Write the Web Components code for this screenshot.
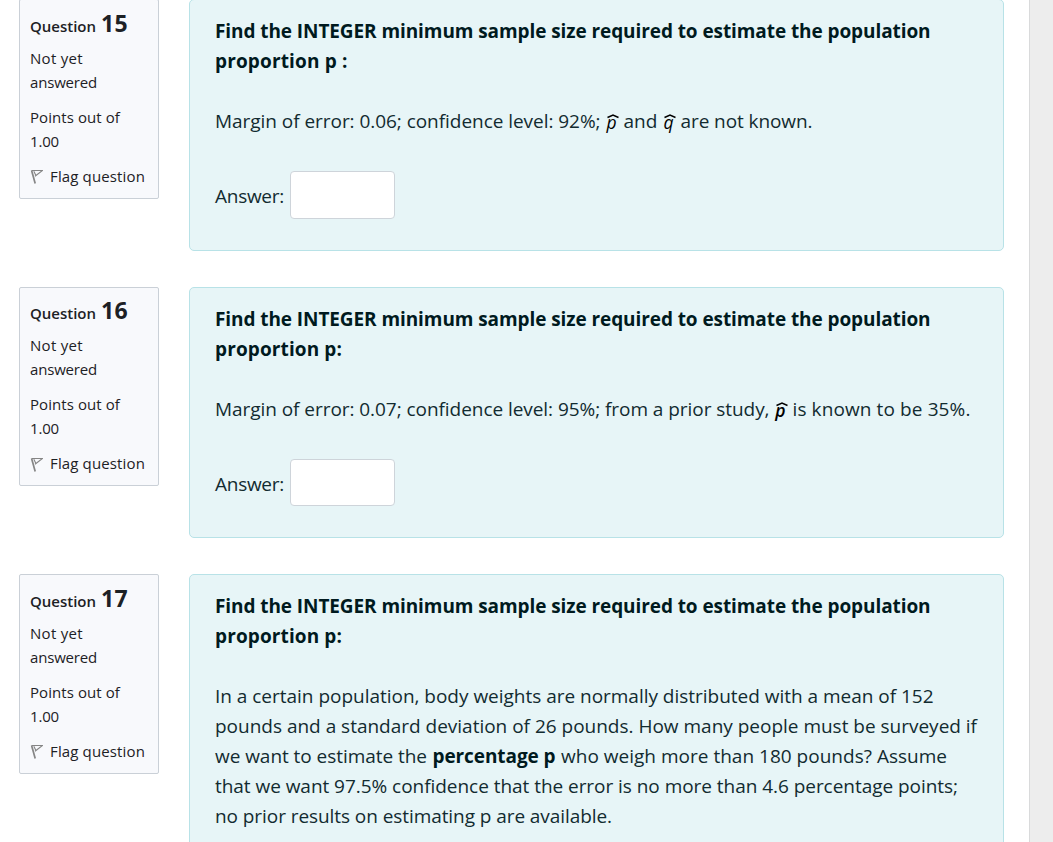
<!DOCTYPE html>
<html lang="en">
<head>
<meta charset="utf-8">
<title>Quiz</title>
<style>
    body {
        margin: 0;
        height: 842px;
        overflow: hidden;
        background: #ededed;
        color: #1d2125;
        font-family: "Open Sans", "Noto Sans", sans-serif;
    }
</style>
</head>
<body>
<quiz-page>
    <quiz-question number="15">
        <fit-line bold width="715.5">Find the INTEGER minimum sample size required to estimate the population</fit-line>
        <fit-line bold width="132.5">proportion p :</fit-line>
        <text-gap></text-gap>
        <text-row>
            <fit-line width="385.5">Margin of error: 0.06; confidence level: 92%;</fit-line>
            <math-hat>p</math-hat>
            <fit-line width="34">and</fit-line>
            <math-hat>q</math-hat>
            <fit-line width="132">are not known.</fit-line>
        </text-row>
        <answer-field></answer-field>
    </quiz-question>
    <quiz-question number="16">
        <fit-line bold width="715.5">Find the INTEGER minimum sample size required to estimate the population</fit-line>
        <fit-line bold width="127">proportion p:</fit-line>
        <text-gap></text-gap>
        <text-row>
            <fit-line width="554.5">Margin of error: 0.07; confidence level: 95%; from a prior study,</fit-line>
            <math-hat heavy>p</math-hat>
            <fit-line width="178">is known to be 35%.</fit-line>
        </text-row>
        <answer-field></answer-field>
    </quiz-question>
    <quiz-question number="17">
        <fit-line bold width="715.5">Find the INTEGER minimum sample size required to estimate the population</fit-line>
        <fit-line bold width="127">proportion p:</fit-line>
        <text-gap></text-gap>
        <fit-line width="718.5">In a certain population, body weights are normally distributed with a mean of 152</fit-line>
        <fit-line width="762">pounds and a standard deviation of 26 pounds. How many people must be surveyed if</fit-line>
        <text-row>
            <fit-line width="212">we want to estimate the</fit-line>
            <fit-line bold width="123" style="margin: 0 5.5px">percentage p</fit-line>
            <fit-line width="386">who weigh more than 180 pounds? Assume</fit-line>
        </text-row>
        <fit-line width="743">that we want 97.5% confidence that the error is no more than 4.6 percentage points;</fit-line>
        <fit-line width="397">no prior results on estimating p are available.</fit-line>
    </quiz-question>
</quiz-page>

<script>
class QuizPage extends HTMLElement {
    constructor() {
        super();
        this.attachShadow({ mode: 'open' });
        this.shadowRoot.innerHTML = `
        <style>
            :host {
                display: flex;
                flex-direction: column;
                gap: 36.4px;
                box-sizing: border-box;
                width: 1030px;
                height: 842px;
                overflow: hidden;
                padding: 0 25px 0 19px;
                background: #fff;
                border-right: 1px solid #d9dadb;
            }
        </style>
        <slot></slot>
        `;
    }
}

// Single line of text, tracked so that it takes exactly the given width.
class FitLine extends HTMLElement {
    constructor() {
        super();
        this.attachShadow({ mode: 'open' });
        this.shadowRoot.innerHTML = `
        <style>
            :host {
                display: block;
                width: max-content;
                white-space: nowrap;
            }

            :host([bold]) {
                font-weight: 700;
                color: #001a1e;
            }
        </style>
        <slot></slot>
        `;
    }

    connectedCallback() {
        const target = Number(this.getAttribute('width'));
        const natural = this.getBoundingClientRect().width;
        const spacing = (target - natural) / this.textContent.length;
        this.style.letterSpacing = `${spacing.toFixed(4)}px`;
    }
}

class TextRow extends HTMLElement {
    constructor() {
        super();
        this.attachShadow({ mode: 'open' });
        this.shadowRoot.innerHTML = `
        <style>
            :host {
                display: flex;
                height: 30px;
            }
        </style>
        <slot></slot>
        `;
    }
}

class TextGap extends HTMLElement {
    constructor() {
        super();
        this.attachShadow({ mode: 'open' });
        this.shadowRoot.innerHTML = `
        <style>
            :host {
                display: block;
                height: 30px;
            }
        </style>
        `;
    }
}

class MathHat extends HTMLElement {
    constructor() {
        super();
        this.attachShadow({ mode: 'open' });
        this.shadowRoot.innerHTML = `
        <style>
            :host {
                display: block;
                position: relative;
                width: 12px;
                margin: 0 6px 0 5px;
                text-align: center;
                font: italic 17.5px/32px "Open Sans", sans-serif;
                color: #000;
            }

            :host([heavy]) {
                font-weight: 600;
            }

            svg {
                position: absolute;
                left: 1px;
                top: 8px;
            }
        </style>
        <slot></slot>
        <svg width="12" height="5" viewBox="0 0 12 5" fill="none" stroke="#000" stroke-width="1.5">
            <path d="M.5 3.5 6 1 11.5 3.5"/>
        </svg>
        `;
    }
}

class AnswerField extends HTMLElement {
    constructor() {
        super();
        this.attachShadow({ mode: 'open' });
        this.shadowRoot.innerHTML = `
        <style>
            :host {
                display: block;
                margin-top: 35px;
            }

            label {
                display: flex;
                align-items: center;
                gap: 6px;
            }

            fit-line {
                padding-top: 2.4px;
            }

            input {
                box-sizing: border-box;
                width: 105px;
                height: 47.4px;
                margin: 0;
                background: #fff;
                border: 1px solid #ced4da;
                border-radius: 4px;
            }
        </style>
        <label><fit-line width="69">Answer:</fit-line><input type="text"></label>
        `;
    }
}

class FlagIcon extends HTMLElement {
    constructor() {
        super();
        this.attachShadow({ mode: 'open' });
        this.shadowRoot.innerHTML = `
        <style>
            :host {
                display: block;
                width: 13px;
                height: 15px;
                padding-top: 2px;
            }

            svg {
                display: block;
            }
        </style>
        <svg width="13" height="15" viewBox="0 0 13 15" fill="none" stroke="#858585">
            <path d="M1.6 1.5 5.2 14.5" stroke-width="1.7"/>
            <path d="M1.6 1.5H12.5L5 7.2M3.8 2.2 5.8 6.3" stroke-width="1.1"/>
        </svg>
        `;
    }
}

class QuizQuestion extends HTMLElement {
    constructor() {
        super();
        this.attachShadow({ mode: 'open' });
        this.shadowRoot.innerHTML = `
        <style>
            :host {
                display: flex;
                flex: none;
                align-items: flex-start;
                justify-content: space-between;
            }

            :host([number="15"]) {
                margin-top: -.7px;
            }

            .info {
                box-sizing: border-box;
                width: 140px;
                height: 199.25px;
                padding: 9.4px 10px;
                background: #f8f9fc;
                border: 1px solid #cad0d7;
                border-radius: 2px;
                font-size: 15px;
                line-height: 24px;
            }

            h3 {
                display: flex;
                align-items: baseline;
                gap: 5px;
                height: 25px;
                margin: 0 0 11px;
                font-size: 15px;
                font-weight: 600;
                line-height: 27px;
            }

            h3 .no {
                font-size: 23px;
                font-weight: 700;
            }

            .block {
                margin-bottom: 11px;
            }

            .flag {
                display: flex;
                align-items: center;
                gap: 7px;
            }

            .content {
                box-sizing: border-box;
                width: 815px;
                min-height: 251.2px;
                padding: 15.9px 25px 30px;
                background: #e7f5f7;
                border: 1px solid #b8e2e7;
                border-radius: 5px;
                color: #122b30;
                font-size: 19px;
                line-height: 30px;
            }

            :host([number="17"]) .content {
                min-height: 300px;
            }
        </style>
        <div class="info">
            <h3><fit-line width="66">Question</fit-line><fit-line class="no" width="27"></fit-line></h3>
            <div class="block">
                <fit-line width="53">Not yet</fit-line>
                <fit-line width="67">answered</fit-line>
            </div>
            <div class="block">
                <fit-line width="90">Points out of</fit-line>
                <fit-line width="29">1.00</fit-line>
            </div>
            <div class="flag"><flag-icon></flag-icon><fit-line width="95">Flag question</fit-line></div>
        </div>
        <div class="content"><slot></slot></div>
        `;
        this.shadowRoot.querySelector('.no').textContent = this.getAttribute('number');
    }
}

customElements.define('quiz-page', QuizPage);
customElements.define('text-row', TextRow);
customElements.define('text-gap', TextGap);
customElements.define('math-hat', MathHat);
customElements.define('flag-icon', FlagIcon);
customElements.define('answer-field', AnswerField);
customElements.define('quiz-question', QuizQuestion);
// last, so that every line is measured in its final font
customElements.define('fit-line', FitLine);
</script>
</body>
</html>
